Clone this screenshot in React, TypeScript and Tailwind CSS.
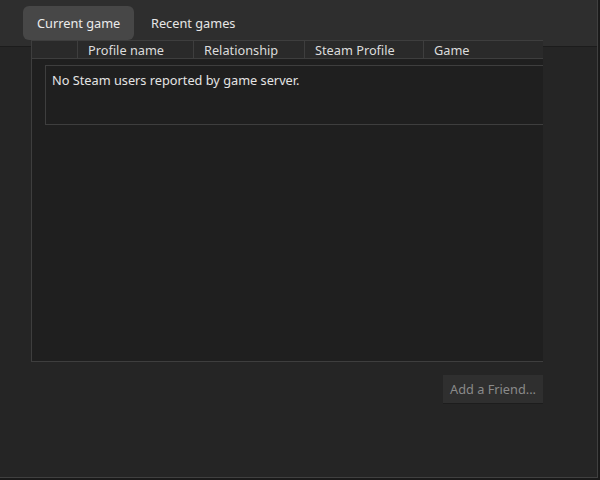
import React from "react";

const cols = [
  { w: "w-[46px]", label: "" },
  { w: "w-[116px]", label: "Profile name" },
  { w: "w-[111px]", label: "Relationship" },
  { w: "w-[119px]", label: "Steam Profile" },
  { w: "w-[140px]", label: "Game" },
];

export default function App() {
  return (
    <div
      className="w-[600px] h-[480px] bg-[#1a1a1a] overflow-hidden"
      style={{ fontFamily: '"Noto Sans", "Open Sans", sans-serif' }}
    >
      <div className="w-[598px] h-[478px] bg-[#252525] border-r border-b border-[#404040] flex flex-col text-[12.75px]">
        {/* tab strip */}
        <div className="h-[47px] shrink-0 bg-[#2e2e2e] border-b border-[#1c1c1c] flex items-start pl-[23px] pt-[6px] gap-[3px]">
          <div className="h-[34px] w-[111px] pl-[14px] pt-[2px] rounded-[6px] bg-[#474747] text-[#ececec] flex items-center">
            Current game
          </div>
          <div className="h-[34px] px-[14px] pt-[2px] text-[#e6e6e6] flex items-center">
            Recent games
          </div>
        </div>

        {/* table */}
        <div className="ml-[31px] mt-[-7px] w-[512px] h-[322px] bg-[#1f1f1f] border-l border-t border-b border-[#3e3e3e] overflow-hidden flex flex-col relative">
          <div className="h-[18px] shrink-0 bg-[#2a2a2a] border-b border-[#3e3e3e] flex">
            {cols.map((c, i) => (
              <div
                key={i}
                className={`${c.w} shrink-0 h-full flex items-center pl-[10px] pt-[3px] text-[#dcdcdc] whitespace-nowrap ${
                  i < cols.length - 1 ? "border-r border-[#3e3e3e]" : ""
                }`}
              >
                {c.label}
              </div>
            ))}
          </div>
          <div className="ml-[13px] mt-[6px] w-[520px] h-[60px] shrink-0 border border-[#3e3e3e] px-[6px] pt-[5px] text-[#e4e4e4]">
            No Steam users reported by game server.
          </div>
        </div>

        {/* button row */}
        <div className="flex justify-end w-[543px] mt-[13px]">
          <div className="w-[100px] h-[29px] pt-[2px] pr-[7px] bg-[#2f2f2f] border-b border-[#1d1d1d] text-[#8a8a8a] flex items-center justify-end">
            Add a Friend...
          </div>
        </div>
      </div>
    </div>
  );
}
